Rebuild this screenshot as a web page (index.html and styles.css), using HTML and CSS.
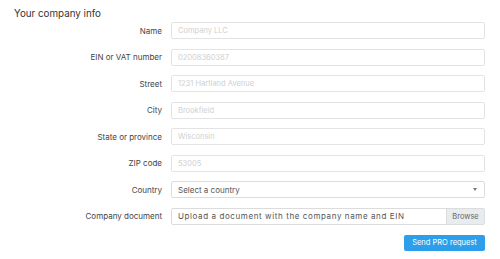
FILE: index.html
```html
<!DOCTYPE html>
<html lang="en">
<head>
    <meta charset="UTF-8">
    <meta name="viewport" content="width=device-width, initial-scale=1.0">
    <title>Company info</title>
    <link rel="stylesheet" href="styles.css">
</head>
<body>
    <div class="container">
        <h2 class="title">Your company info</h2>
        <form class="company-form">
            <label class="form-label" for="name">Name</label>
            <input class="form-input" id="name" type="text" placeholder="Company LLC">

            <label class="form-label" for="ein">EIN or VAT number</label>
            <input class="form-input" id="ein" type="text" placeholder="02008360387">

            <label class="form-label" for="street">Street</label>
            <input class="form-input" id="street" type="text" placeholder="1231 Hartland Avenue">

            <label class="form-label" for="city">City</label>
            <input class="form-input" id="city" type="text" placeholder="Brookfield">

            <label class="form-label" for="state">State or province</label>
            <input class="form-input" id="state" type="text" placeholder="Wisconsin">

            <label class="form-label" for="zip">ZIP code</label>
            <input class="form-input" id="zip" type="text" placeholder="53005">

            <label class="form-label" for="country">Country</label>
            <div class="form-select" id="country">
                <span>Select a country</span>
                <svg class="caret" width="4" height="3" viewBox="0 0 4 3"><path d="M0 0h4L2 3z" fill="#777"/></svg>
            </div>

            <label class="form-label">Company document</label>
            <div class="file-input">
                <span class="file-text">Upload a document with the company name and EIN</span>
                <span class="file-browse">Browse</span>
            </div>

            <div class="form-actions">
                <button class="btn btn-primary" type="button">Send PRO request</button>
            </div>
        </form>
    </div>
</body>
</html>
```

FILE: styles.css
```css
body {
    font-family: Inter, "Noto Sans", sans-serif;
    background-color: #fff;
    color: #333;
    margin: 0;
    padding: 0;
}
.container {
    padding: 6px 15px 0 14px;
}
.title {
    font-size: 9.8px;
    font-weight: 400;
    color: #333;
    margin: 0;
    height: 16px;
    line-height: 16px;
}
.company-form {
    display: grid;
    grid-template-columns: 148px 314px;
    column-gap: 9px;
    row-gap: 9.5px;
    align-items: center;
}
.form-label {
    font-size: 8px;
    color: #444;
    text-align: right;
}
.form-input,
.form-select,
.file-input {
    box-sizing: border-box;
    height: 17px;
    border: 1px solid #e3e3e3;
    border-radius: 2px;
    font-family: inherit;
    font-size: 7.5px;
    padding: 0 6px;
    margin: 0;
    background: #fff;
    outline: none;
}
.form-input::placeholder {
    color: #d0d0d0;
}
.form-select {
    display: flex;
    align-items: center;
    justify-content: space-between;
    color: #555;
    border-color: #dcdcdc;
    font-size: 8px;
}
.caret {
    margin-right: 1px;
}
.file-input {
    display: flex;
    align-items: stretch;
    padding: 0;
    color: #555;
    border-color: #dcdcdc;
}
.file-text {
    flex: 1;
    display: flex;
    align-items: center;
    padding-left: 6px;
    font-size: 8px;
    letter-spacing: 0.6px;
}
.file-browse {
    display: flex;
    align-items: center;
    width: 37px;
    justify-content: center;
    background-color: #e9ecef;
    border-left: 1px solid #dcdcdc;
    color: #666;
}
.form-actions {
    grid-column: 2;
    display: flex;
    justify-content: flex-end;
    margin-top: 0.5px;
}
.btn {
    border: none;
    border-radius: 2px;
    font-family: inherit;
    font-size: 7.5px;
    height: 16px;
    padding: 0 5px;
    cursor: pointer;
}
.btn-primary {
    background-color: #2d9fea;
    color: #fff;
    width: 81px;
}
```
